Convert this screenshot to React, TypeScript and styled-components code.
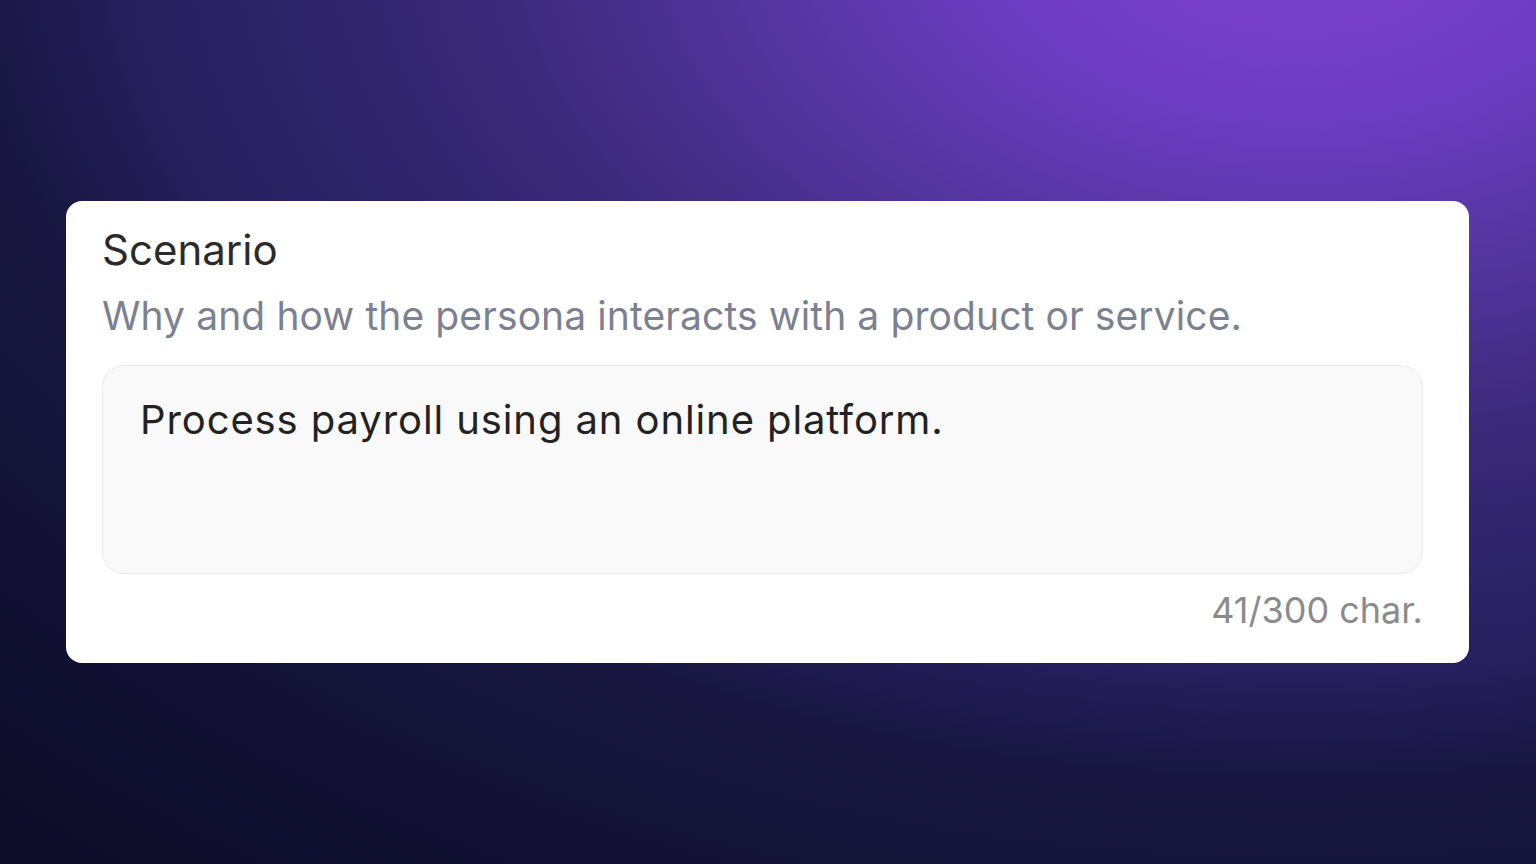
import React from "react";
import styled, { createGlobalStyle } from "styled-components";

const Global = createGlobalStyle`
  html, body { margin: 0; padding: 0; }
  body { font-family: Inter, "Noto Sans", sans-serif; }
`;

const Stage = styled.div`
  width: 1536px;
  height: 864px;
  box-sizing: border-box;
  padding-top: 201px;
  padding-left: 66px;
  overflow: hidden;
  background: radial-gradient(
    ellipse 1400px 900px at 1300px -80px,
    #7b42ce 0%,
    #7841cc 10%,
    #6a3cc0 23%,
    #5a38a8 35%,
    #3a2a7a 58%,
    #251f5c 84%,
    #181640 96%,
    #0c0c26 140%
  );
`;

const Card = styled.section`
  width: 1403px;
  height: 462px;
  box-sizing: border-box;
  background: #ffffff;
  border-radius: 16px;
  padding: 22px 46px 0 36px;
  display: flex;
  flex-direction: column;
`;

const Title = styled.h2`
  margin: 0;
  font-size: 42px;
  line-height: 54px;
  font-weight: 400;
  color: #2b2b2b;
`;

const Subtitle = styled.p`
  margin: 12px 0 0;
  font-size: 39px;
  line-height: 54px;
  letter-spacing: 0.1px;
  color: #7b8191;
`;

const Field = styled.div`
  margin-top: 22px;
  height: 209px;
  box-sizing: border-box;
  background: #f9f9f9;
  border: 1.5px solid #ebebeb;
  border-radius: 22px;
  padding: 27px 37px;
  font-size: 40px;
  line-height: 54px;
  letter-spacing: 0.9px;
  color: #222222;
`;

const Counter = styled.div`
  margin-top: 14px;
  text-align: right;
  font-size: 36px;
  line-height: 44px;
  color: #8b8b8b;
`;

export default function App() {
  return (
    <>
      <Global />
      <Stage>
        <Card>
          <Title>Scenario</Title>
          <Subtitle>Why and how the persona interacts with a product or service.</Subtitle>
          <Field>Process payroll using an online platform.</Field>
          <Counter>41/300 char.</Counter>
        </Card>
      </Stage>
    </>
  );
}
